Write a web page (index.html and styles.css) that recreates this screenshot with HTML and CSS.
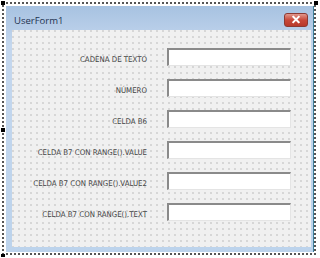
FILE: index.html
```html
<!DOCTYPE html>
<html lang="es">
<head>
  <meta charset="UTF-8" />
  <title>UserForm1</title>
  <link rel="stylesheet" href="styles.css">
</head>
<body>
  <div class="stage">
    <!-- selection handles of the designer -->
    <span class="handle h-tl"></span>
    <span class="handle h-tr"></span>
    <span class="handle h-ml"></span>
    <span class="handle h-bl"></span>
    <div class="window">
      <div class="titlebar">
        <span class="title">UserForm1</span>
        <span class="close">
          <svg viewBox="0 0 10 10" width="10" height="9">
            <path d="M2,2 L8,8 M8,2 L2,8" stroke="white" stroke-width="2.2" stroke-linecap="square" />
          </svg>
        </span>
      </div>
      <div class="client">
        <div class="form-grid">
          <label class="lbl">CADENA DE TEXTO</label>
          <div class="txt"></div>
          <label class="lbl">NÚMERO</label>
          <div class="txt"></div>
          <label class="lbl">CELDA B6</label>
          <div class="txt"></div>
          <label class="lbl">CELDA B7 CON RANGE().VALUE</label>
          <div class="txt"></div>
          <label class="lbl">CELDA B7 CON RANGE().VALUE2</label>
          <div class="txt"></div>
          <label class="lbl">CELDA B7 CON RANGE().TEXT</label>
          <div class="txt"></div>
        </div>
      </div>
    </div>
  </div>
</body>
</html>
```

FILE: styles.css
```css
body {
  margin: 0;
  background: white;
  font-family: "DejaVu Sans Condensed", "DejaVu Sans", sans-serif;
}
.stage {
  position: relative;
  width: 314px;
  height: 253px;
  margin: 2px;
  border: 2px dotted #555;
  box-sizing: border-box;
  padding: 2px 0 1px 2px;
}
.handle {
  position: absolute;
  width: 4px;
  height: 4px;
  background: black;
}
.h-tl { left: -3px; top: -3px; }
.h-tr { right: -4px; top: -3px; }
.h-ml { left: -3px; top: 124px; }
.h-bl { left: -3px; bottom: -5px; }
.window {
  width: 308px;
  height: 246px;
  box-sizing: border-box;
  background: linear-gradient(#a7c2e1, #c4d7ee 40px, #bcd3ec);
  border-right: 1px solid #3d7f9a;
  display: flex;
  flex-direction: column;
}
.titlebar {
  height: 24px;
  display: flex;
  align-items: center;
  justify-content: space-between;
  padding: 0 5px 0 8px;
}
.title {
  font-family: "Open Sans", sans-serif;
  font-size: 9.5px;
  color: #1e3350;
  padding-top: 4px;
}
.close {
  width: 24px;
  height: 14px;
  margin-top: 3px;
  border: 1px solid #8c3a33;
  border-radius: 3px;
  box-sizing: border-box;
  background: linear-gradient(#e1978c, #c8493a 50%, #b83a2c);
  display: flex;
  align-items: center;
  justify-content: center;
}
.client {
  flex: 1;
  margin: 0 2px 5px 6px;
  background-color: #f0f0f0;
  background-image: radial-gradient(circle at 1px 1px, #b8b8b8 0.6px, transparent 0.8px);
  background-size: 6px 6px;
}
.form-grid {
  display: grid;
  grid-template-columns: 135px 124px;
  grid-auto-rows: 18px;
  column-gap: 20px;
  row-gap: 13px;
  padding-top: 18px;
}
.lbl {
  font-size: 7.8px;
  color: #444;
  text-align: right;
  line-height: 10px;
  padding-top: 7px;
  white-space: nowrap;
}
.txt {
  background: white;
  border-top: 2px solid #8a8a8a;
  border-left: 2px solid #8a8a8a;
  border-right: 1px solid #e4e4e4;
  border-bottom: 1px solid #e4e4e4;
  box-sizing: border-box;
}
```
